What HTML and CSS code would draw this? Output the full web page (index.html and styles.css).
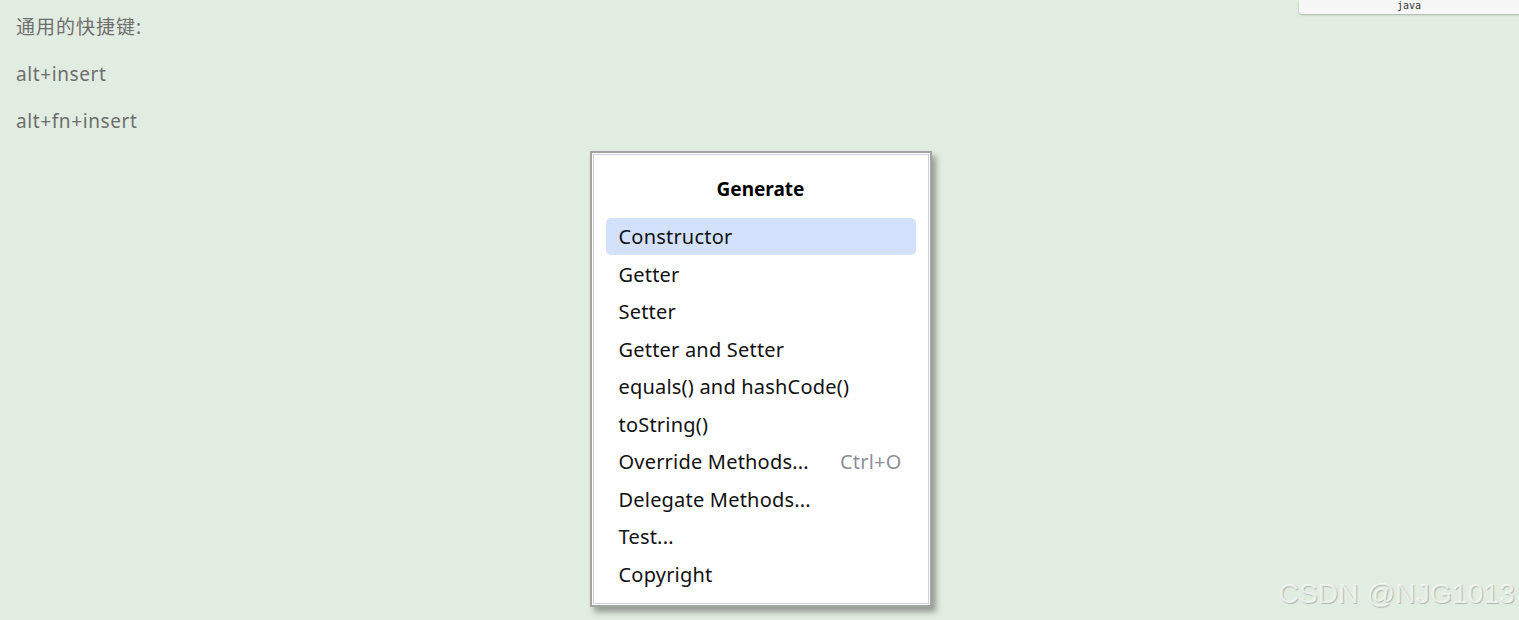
FILE: index.html
```html
<!DOCTYPE html>
<html lang="zh">
<head>
<meta charset="utf-8">
<title>Generate</title>
<link rel="stylesheet" href="styles.css">
</head>
<body>
<div class="page">
  <div class="code-tab"><span>java</span></div>
  <p class="line cn">通用的快捷键:</p>
  <p class="line">alt+insert</p>
  <p class="line">alt+fn+insert</p>
  <div class="figure">
    <div class="dialog">
      <div class="title">Generate</div>
      <ul class="menu">
        <li class="item active">Constructor</li>
        <li class="item">Getter</li>
        <li class="item">Setter</li>
        <li class="item">Getter and Setter</li>
        <li class="item">equals() and hashCode()</li>
        <li class="item">toString()</li>
        <li class="item"><span>Override Methods...</span><span class="shortcut">Ctrl+O</span></li>
        <li class="item">Delegate Methods...</li>
        <li class="item">Test...</li>
        <li class="item">Copyright</li>
      </ul>
    </div>
  </div>
  <div class="watermark">CSDN @NJG1013</div>
</div>
</body>
</html>
```

FILE: styles.css
```css
html, body {
  margin: 0;
  padding: 0;
  background: #e2ede1;
}
.page {
  position: relative;
  width: 1519px;
  height: 620px;
  overflow: hidden;
  padding: 13px 0 0 16px;
  box-sizing: border-box;
  font-family: "Noto Sans", "Noto Sans CJK SC", sans-serif;
}
.line {
  margin: 0 0 19px 0;
  font-size: 19px;
  line-height: 28px;
  letter-spacing: 0.6px;
  color: #6e6e6e;
}
.line.cn {
  letter-spacing: 1px;
  font-size: 19px;
}
.code-tab {
  position: absolute;
  top: 0;
  left: 1299px;
  width: 230px;
  height: 14px;
  background: #f7f7f7;
  border-radius: 0 0 0 3px;
  box-shadow: 0 1px 2px rgba(0,0,0,0.25);
  text-align: center;
  font-family: "DejaVu Sans Mono", monospace;
  font-size: 10px;
  line-height: 11px;
  color: #333;
}
.code-tab span {
  display: block;
  padding-right: 10px;
}
.figure {
  display: flex;
  justify-content: center;
  margin-top: -3px;
  margin-left: -14px;
}
.dialog {
  width: 342px;
  box-sizing: border-box;
  background: #fff;
  border: 2px solid #a3a3a3;
  box-shadow: inset 0 0 0 1px #fff, inset 0 0 0 2px #cfcfe0, 4px 5px 6px rgba(0,0,0,0.35);
  padding: 23px 14px 12px 14px;
  font-family: "Noto Sans", sans-serif;
}
.title {
  text-align: center;
  font-weight: bold;
  font-size: 19px;
  line-height: 26px;
  color: #000;
  margin-bottom: 16px;
}
.menu {
  list-style: none;
  margin: 0;
  padding: 0;
}
.item {
  display: flex;
  justify-content: space-between;
  height: 37.5px;
  line-height: 38.5px;
  padding: 0 13px 0 13px;
  font-size: 20px;
  letter-spacing: 0.2px;
  color: #111;
  border-radius: 5px;
}
.item.active {
  background: #d3e1fc;
  height: 37px;
  margin-bottom: 0.5px;
}
.shortcut {
  color: #8f8f99;
  margin-right: 1px;
}
.watermark {
  position: absolute;
  right: 4px;
  bottom: 10px;
  font-family: "Liberation Sans", Arial, sans-serif;
  font-size: 28px;
  line-height: 32px;
  color: rgba(250,252,250,0.75);
  text-shadow: 1px 1px 1px rgba(0,0,0,0.22);
  letter-spacing: 0.2px;
}
```
